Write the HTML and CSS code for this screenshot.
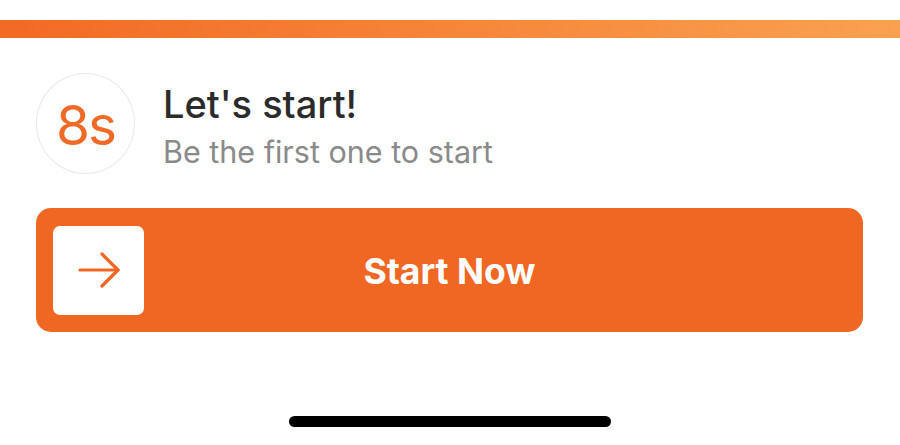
FILE: index.html
```html
<!DOCTYPE html>
<html lang="en">

<head>
    <meta charset="UTF-8">
    <meta name="viewport" content="width=device-width, initial-scale=1.0">
    <title>Let's start</title>
    <link rel="stylesheet" href="styles.css">
</head>

<body>
    <div class="progress"></div>
    <div class="status">
        <div class="timer">8s</div>
        <div class="statusText">
            <h1>Let's start!</h1>
            <p>Be the first one to start</p>
        </div>
    </div>
    <button class="startButton">
        <span class="arrowBox">
            <svg width="44" height="38" viewBox="0 0 44 38" fill="none" stroke="#f06724" stroke-width="3.2"
                stroke-linecap="round" stroke-linejoin="round">
                <path d="M3 19 H41" />
                <path d="M25 3 L41 19 L25 35" />
            </svg>
        </span>
        <span class="label">Start Now</span>
    </button>
    <div class="homeBar"></div>
</body>

</html>
```

FILE: styles.css
```css
body {
    margin: 0px;
    padding: 0px;
    background-color: white;
    font-family: Inter, "Liberation Sans", Arial, sans-serif;
    width: 900px;
    height: 445px;
    overflow: hidden;

    .progress {
        margin-top: 20px;
        height: 18px;
        background: linear-gradient(to right, #f26a24, #f9a14f);
    }

    .status {
        display: flex;
        align-items: center;
        margin: 35px 0 0 36px;
        gap: 28px;

        .timer {
            width: 97px;
            height: 97px;
            border: 1.5px solid #e8e8e8;
            border-radius: 50%;
            display: flex;
            align-items: center;
            justify-content: center;
            color: #ef6a26;
            font-size: 55px;
            letter-spacing: -2px;
            padding-top: 2px;
            box-sizing: content-box;
        }

        .statusText {
            margin-top: 4px;

            h1 {
                margin: 0;
                font-size: 38px;
                font-weight: 500;
                line-height: 44px;
                color: #2b2b2b;
            }

            p {
                margin: 8px 0 0 0;
                font-size: 30.5px;
                line-height: 36px;
                color: #8a8a8a;
            }
        }
    }

    .startButton {
        display: flex;
        align-items: center;
        position: relative;
        box-sizing: border-box;
        width: 827px;
        height: 124px;
        margin: 34px 0 0 36px;
        padding: 0 0 0 17px;
        border: none;
        border-radius: 15px;
        background-color: #f06724;
        font-family: inherit;

        .arrowBox {
            width: 91px;
            height: 89px;
            border-radius: 7px;
            background-color: white;
            display: flex;
            align-items: center;
            justify-content: center;
        }

        .label {
            position: absolute;
            left: 0;
            right: 0;
            top: 46px;
            text-align: center;
            color: white;
            font-size: 35.5px;
            line-height: 36px;
            font-weight: 700;
        }
    }

    .homeBar {
        width: 322px;
        height: 11px;
        margin: 84px auto 0;
        border-radius: 6px;
        background-color: black;
    }
}
```
